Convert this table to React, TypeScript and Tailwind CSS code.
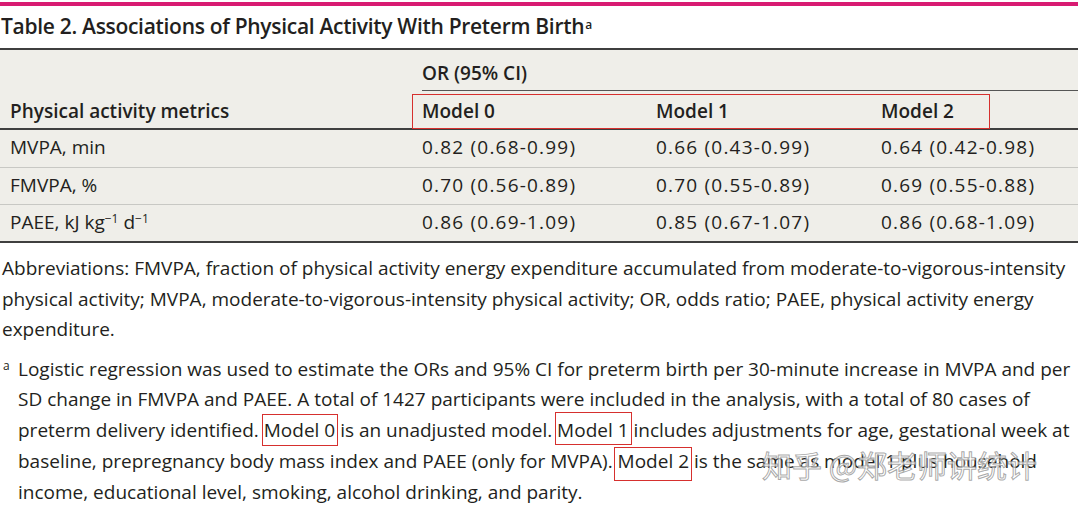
import React from "react";

const font = "font-['Open_Sans','Noto_Sans',sans-serif]";

function Box({ children, className }: { children: React.ReactNode; className: string }) {
  return (
    <span className="relative">
      {children}
      <span className={"absolute border-[1.5px] border-[#d6302e] " + className} />
    </span>
  );
}

const rows = [
  { m: "MVPA, min", v: ["0.82 (0.68-0.99)", "0.66 (0.43-0.99)", "0.64 (0.42-0.98)"] },
  { m: "FMVPA, %", v: ["0.70 (0.56-0.89)", "0.70 (0.55-0.89)", "0.69 (0.55-0.88)"] },
  { m: "PAEE", v: ["0.86 (0.69-1.09)", "0.85 (0.67-1.07)", "0.86 (0.68-1.09)"] },
];

export default function App() {
  return (
    <div className={"w-[1080px] h-[514px] bg-white text-[#231f20] overflow-hidden relative " + font}>
      <div className="pt-[2px]">
        <div className="h-[4px] w-[1078px] bg-[#d81b72]" />
      </div>
      <div className="h-[42px] flex items-center pl-[1px] text-[21px] font-semibold tracking-[-0.3px] whitespace-nowrap">
        Table 2. Associations of Physical Activity With Preterm Birth
        <sup className="text-[12px] font-semibold ml-[1px] relative top-[-2px]">a</sup>
      </div>
      <div className="w-[1078px] border-t-2 border-b-2 border-[#3f3f3f] bg-[#efeee9] relative text-[19px]">
        <div className="grid grid-cols-[412px_234px_225px_1fr]">
          <div className="h-[41px]" />
          <div className="col-span-3 h-[41px] flex items-end pb-[3px] ml-[10px] font-semibold border-b border-[#555]">
            OR (95% CI)
          </div>
          <div className="h-[37px] flex items-center pt-[3px] pl-[10px] font-semibold">Physical activity metrics</div>
          <div className="h-[37px] flex items-center pt-[3px] pl-[10px] font-semibold">Model 0</div>
          <div className="h-[37px] flex items-center pt-[3px] pl-[10px] font-semibold">Model 1</div>
          <div className="h-[37px] flex items-center pt-[3px] pl-[10px] font-semibold">Model 2</div>
        </div>
        <div className="border-t-2 border-[#3f3f3f]">
          {rows.map((r, i) => (
            <div
              key={i}
              className={
                "grid grid-cols-[412px_234px_225px_1fr] h-[37px] items-center pb-[2px] " +
                (i > 0 ? "border-t border-[#c8c8c4]" : "")
              }
            >
              <div className="pl-[10px] whitespace-nowrap">
                {i === 2 ? (
                  <>
                    PAEE, kJ kg<sup className="text-[12px]">−1</sup> d<sup className="text-[12px]">−1</sup>
                  </>
                ) : (
                  r.m
                )}
              </div>
              {r.v.map((v, j) => (
                <div key={j} className="pl-[10px] whitespace-nowrap tracking-[1.2px]">
                  {v}
                </div>
              ))}
            </div>
          ))}
        </div>
        <div className="absolute left-[412px] top-[44px] w-[578px] h-[35px] border-[1.5px] border-[#d6302e]" />
      </div>
      <div className="mt-[10px] pl-[2px] text-[19px] leading-[30.5px] whitespace-nowrap">
        <div>Abbreviations: FMVPA, fraction of physical activity energy expenditure accumulated from moderate-to-vigorous-intensity</div>
        <div>physical activity; MVPA, moderate-to-vigorous-intensity physical activity; OR, odds ratio; PAEE, physical activity energy</div>
        <div>expenditure.</div>
      </div>
      <div className="mt-[9px] text-[19px] leading-[30.8px] whitespace-nowrap flex">
        <div className="w-[18px] pl-[3px] text-[12px] leading-[24px]">a</div>
        <div>
          <div>Logistic regression was used to estimate the ORs and 95% CI for preterm birth per 30-minute increase in MVPA and per</div>
          <div>SD change in FMVPA and PAEE. A total of 1427 participants were included in the analysis, with a total of 80 cases of</div>
          <div>
            preterm delivery identified. <Box className="-left-[2px] -right-[3px] -top-[3px] -bottom-[3px]">Model 0</Box> is an unadjusted model.{" "}
            <Box className="-left-[2px] -right-[3px] -top-[5px] -bottom-[2px]">Model 1</Box> includes adjustments for age, gestational week at
          </div>
          <div>
            baseline, prepregnancy body mass index and PAEE (only for MVPA).{" "}
            <Box className="-left-[4px] -right-[3px] -top-[1px] -bottom-[7px]">Model 2</Box> is the same as model 1 plus household
          </div>
          <div>income, educational level, smoking, alcohol drinking, and parity.</div>
        </div>
      </div>
      <div className="absolute left-[762px] top-[446px] text-[30px] leading-[36px] font-['Noto_Sans_CJK_SC',sans-serif] text-white/70 [-webkit-text-stroke:1px_rgba(140,140,140,0.75)] whitespace-nowrap">
        知乎 @郑老师讲统计
      </div>
    </div>
  );
}
